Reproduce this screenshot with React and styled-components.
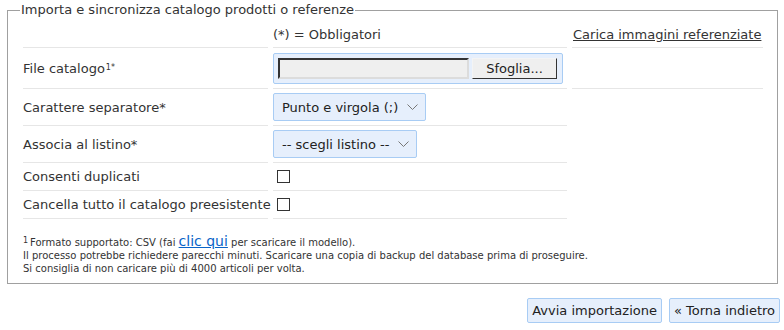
import React from "react";
import styled, { createGlobalStyle } from "styled-components";

const Global = createGlobalStyle`
  html, body { margin: 0; padding: 0; background: #fff; }
  body { font-family: "DejaVu Sans", Verdana, sans-serif; color: #333; font-size: 13px; }
`;

const Page = styled.div`
  padding: 2px 6px 0 7px;
  width: 771px;
`;

const Fieldset = styled.fieldset`
  margin: 0;
  border: 1px solid #a0a0a0;
  padding: 4px 14px 8px 15px;
  min-width: 0;
`;

const Legend = styled.legend`
  padding: 0 1px 0 1px;
  margin-left: -3px;
  font-size: 13px;
  line-height: 16px;
  color: #333;
`;

const Grid = styled.div`
  display: grid;
  grid-template-columns: 245px 294px 191px;
  column-gap: 5px;
`;

const Cell = styled.div`
  display: flex;
  align-items: center;
  height: ${(p) => p.$h}px;
  border-bottom: ${(p) => (p.$line ? "1px solid #e6e6e6" : "none")};
  box-sizing: border-box;
  white-space: nowrap;
`;

const Sup = styled.sup`
  font-size: 8px;
  vertical-align: 4px;
  line-height: 0;
  margin-left: 1px;
`;

const TopLink = styled.a`
  color: #333;
  text-decoration: underline;
  cursor: pointer;
  margin-left: 1px;
`;

const FileBox = styled.div`
  display: flex;
  align-items: center;
  gap: 3px;
  width: 290px;
  height: 31px;
  box-sizing: border-box;
  padding: 0 5px 0 4px;
  background: #e6effc;
  border: 1px solid #a8ccf4;
  border-radius: 2px;
`;

const FileField = styled.div`
  width: 191px;
  height: 21px;
  box-sizing: border-box;
  background: #efefef;
  border-top: 2px solid #333;
  border-left: 2px solid #333;
  border-bottom: 2px solid #dcdcdc;
  border-right: 2px solid #dcdcdc;
`;

const Browse = styled.button`
  width: 85px;
  height: 21px;
  box-sizing: border-box;
  padding: 0;
  font-family: inherit;
  font-size: 13px;
  color: #222;
  background: #efefef;
  border-top: 1px solid #f4f4f4;
  border-left: 1px solid #f4f4f4;
  border-bottom: 1px solid #333;
  border-right: 1px solid #333;
`;

const Select = styled.div`
  display: flex;
  align-items: center;
  gap: 9px;
  height: 28px;
  box-sizing: border-box;
  padding: 0 7px 0 8px;
  background: #e6effc;
  border: 1px solid #a8ccf4;
  border-radius: 2px;
  color: #222;
  font-size: 13px;
`;

const Chevron = () => (
  <svg width="11" height="7" viewBox="0 0 11 7">
    <path d="M0.5 0.5 L5.5 5.5 L10.5 0.5" fill="none" stroke="#777" strokeWidth="1" />
  </svg>
);

const Check = styled.span`
  display: inline-block;
  width: 13px;
  height: 13px;
  box-sizing: border-box;
  border: 1px solid #333;
  background: #fff;
  margin-left: 4px;
`;

const Notes = styled.div`
  margin-top: 16px;
  font-size: 10px;
  line-height: 13px;
  color: #333;
`;

const NoteSup = styled.sup`
  font-size: 8px;
  vertical-align: 3px;
  line-height: 0;
  margin-right: 2px;
`;

const NoteLink = styled.a`
  color: #0a64c8;
  font-size: 14px;
  text-decoration: underline;
  cursor: pointer;
`;

const Actions = styled.div`
  display: flex;
  justify-content: flex-end;
  gap: 7px;
  margin-top: 14px;
  margin-right: -2px;
`;

const Button = styled.button`
  height: 25px;
  box-sizing: border-box;
  padding: 0 4px;
  font-family: inherit;
  font-size: 13px;
  color: #222;
  background: #e6effc;
  border: 1px solid #a8ccf4;
  border-radius: 2px;
`;

const rows = [
  { label: "File catalogo", sup: "1", h: 41, kind: "file" },
  { label: "Carattere separatore*", h: 37, kind: "select", value: "Punto e virgola (;)" },
  { label: "Associa al listino*", h: 37, kind: "select", value: "-- scegli listino --" },
  { label: "Consenti duplicati", h: 28, kind: "check" },
  { label: "Cancella tutto il catalogo preesistente", h: 28, kind: "check" },
];

export default function App() {
  return (
    <Page>
      <Global />
      <Fieldset>
        <Legend>Importa e sincronizza catalogo prodotti o referenze</Legend>
        <Grid>
          <Cell $h={26} $line />
          <Cell $h={26} $line>(*) = Obbligatori</Cell>
          <Cell $h={26} $line>
            <TopLink>Carica immagini referenziate</TopLink>
          </Cell>
          {rows.map((r) => (
            <React.Fragment key={r.label}>
              <Cell $h={r.h} $line>
                {r.label}
                {r.sup && <Sup>1*</Sup>}
              </Cell>
              <Cell $h={r.h} $line>
                {r.kind === "file" && (
                  <FileBox>
                    <FileField />
                    <Browse>Sfoglia...</Browse>
                  </FileBox>
                )}
                {r.kind === "select" && (
                  <Select>
                    {r.value}
                    <Chevron />
                  </Select>
                )}
                {r.kind === "check" && <Check />}
              </Cell>
              <Cell $h={r.h} $line={r.kind === "file"} />
            </React.Fragment>
          ))}
        </Grid>
        <Notes>
          <div>
            <NoteSup>1</NoteSup>Formato supportato: CSV (fai <NoteLink>clic qui</NoteLink> per scaricare il modello).
          </div>
          <div>
            Il processo potrebbe richiedere parecchi minuti. Scaricare una copia di backup del database prima di proseguire.
          </div>
          <div>Si consiglia di non caricare più di 4000 articoli per volta.</div>
        </Notes>
      </Fieldset>
      <Actions>
        <Button>Avvia importazione</Button>
        <Button>« Torna indietro</Button>
      </Actions>
    </Page>
  );
}
